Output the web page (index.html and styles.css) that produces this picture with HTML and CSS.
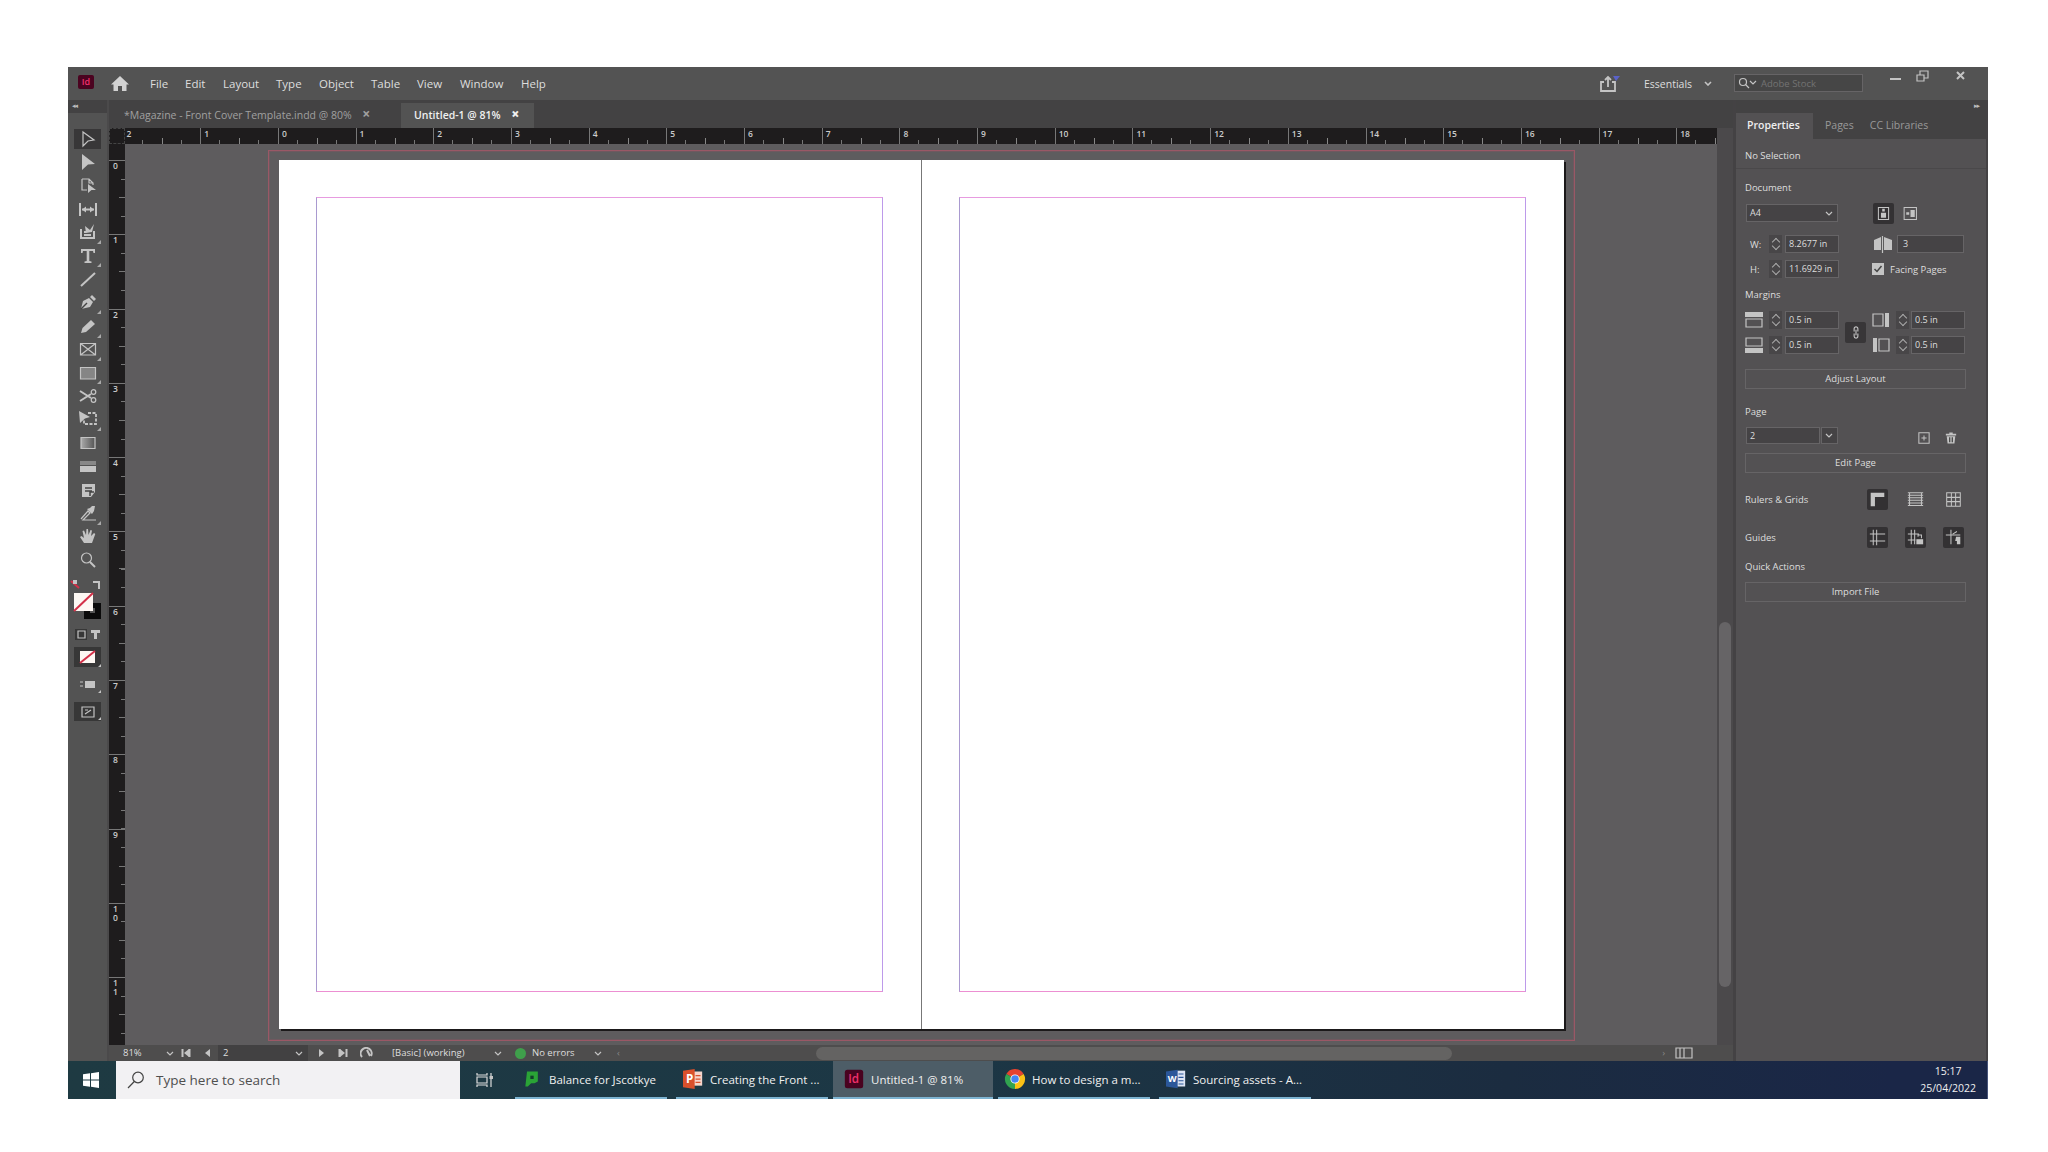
FILE: index.html
```
<!DOCTYPE html>
<html lang="en">
<head>
    <meta charset="UTF-8">
    <meta name="viewport" content="width=device-width, initial-scale=1.0">
    <title>Untitled-1 @ 81%</title>
    <link rel="stylesheet" href="styles.css">
</head>
<body>
    <div class="screen">
        <header class="menubar">
            <div class="app-logo">Id</div>
            <svg class="home" viewBox="0 0 18 16"><path d="M9 0L18 8.500H15.500V15H11V10H7V15H2.500V8.500H0Z"/></svg>
            <nav class="menu">
                <span>File</span><span>Edit</span><span>Layout</span><span>Type</span><span>Object</span><span>Table</span><span>View</span><span>Window</span><span>Help</span>
            </nav>
            <svg class="share" viewBox="0 0 22 18"><path class="line2" d="M5 7H2V16H16V7H13M9 12V3M6 5L9 2L12 5"/><path class="blue" d="M14 1h7l-4 5z"/></svg>
            <span class="workspace">Essentials</span>
            <svg class="chev big" viewBox="0 0 8 5"><path d="M1 1L4 4L7 1"/></svg>
            <div class="stock">
                <svg viewBox="0 0 20 12"><circle cx="5" cy="5" r="3.500"/><path d="M7.500 7.500L11 11M12 4L15 7L18 4"/></svg>
                <span>Adobe Stock</span>
            </div>
            <svg class="winbtns" viewBox="0 0 80 16"><path class="thick" d="M2 10H13"/><path d="M29 6H36V12H29ZM32 6V2H40V9H36"/><path class="thick" d="M69 3L76 10M76 3L69 10"/></svg>
        </header>

        <div class="workarea">
            <aside class="toolbar">
                <div class="strip">◂◂</div>
                <div class="tools">
                    <div class="tool on"><svg viewBox="0 0 20 20"><path d="M5 3L16 11L10 12L5 17Z"/></svg></div>
                    <div class="tool"><svg viewBox="0 0 20 20"><path class="fill" d="M4 2L17 12L10 12.500L4 18Z"/></svg></div>
                    <div class="tool"><svg viewBox="0 0 20 20"><path d="M4 4H11L15 8V10M4 4V15H9M11 4V8H15"/><path class="fill" d="M10 9L18 15L13.500 15L10 18Z"/></svg></div>
                    <div class="tool"><svg viewBox="0 0 20 20"><path class="thick" d="M2 4V17M18 4V17M4 10.500H16"/><path class="fill" d="M4 10.500L8 7.500V13.500ZM16 10.500L12 7.500V13.500Z"/></svg></div>
                    <div class="tool more"><svg viewBox="0 0 20 20"><path class="thick" d="M3 7V16H16V9M6 13H13M6 10H8"/><path class="fill" d="M7 4L12 8L16 2L14 10L8 11Z"/></svg></div>
                    <div class="tool more"><svg viewBox="0 0 20 20"><path class="fill" d="M3 3H17V7H15.500L15 5H11.300V15L13.500 15.500V17H6.500V15.500L8.700 15V5H5L4.500 7H3Z"/></svg></div>
                    <div class="tool"><svg viewBox="0 0 20 20"><path class="thick" d="M3 17L17 4"/></svg></div>
                    <div class="tool more"><svg viewBox="0 0 20 20"><path class="fill" d="M3 17L5 9L11 6L15 10L12 15ZM12 5L14 3L18 7L16 9Z"/><path class="dark" d="M3 17L9 11"/></svg></div>
                    <div class="tool more"><svg viewBox="0 0 20 20"><path class="fill" d="M3 17L4.500 12L13 4L17 8L8 16Z"/></svg></div>
                    <div class="tool more"><svg viewBox="0 0 20 20"><path d="M2.500 4.500H17.500V16H2.500ZM2.500 4.500L17.500 16M17.500 4.500L2.500 16"/></svg></div>
                    <div class="tool more"><svg viewBox="0 0 20 20"><path class="mid" d="M2.500 4.500H17.500V16H2.500Z"/></svg></div>
                    <div class="tool"><svg viewBox="0 0 20 20"><path class="thick" d="M2 5L13 12M2 15L13 8"/><circle cx="15.500" cy="6" r="2.300"/><circle cx="15.500" cy="14" r="2.300"/></svg></div>
                    <div class="tool more"><svg viewBox="0 0 20 20"><path class="fill" d="M1 2L12 8L7 9.500L2 14Z"/><path class="dash" d="M10 4H18V15H6V10"/></svg></div>
                    <div class="tool"><svg viewBox="0 0 20 20"><defs><linearGradient id="ga"><stop offset="0" stop-color="#aaa"/><stop offset="1" stop-color="#555"/></linearGradient></defs><path fill="url(#ga)" style="fill:url(#ga)" d="M3 4.500H17V15.500H3Z"/></svg></div>
                    <div class="tool"><svg viewBox="0 0 20 20"><path class="fill dim" d="M2 5H18V9H2Z"/><path class="fill" d="M2 10H18V16H2Z"/></svg></div>
                    <div class="tool"><svg viewBox="0 0 20 20"><path class="fill" d="M4 4H17V12L13 17H4Z"/><path class="dark" d="M7 8H14M7 11H14M12 16V12H16"/></svg></div>
                    <div class="tool more"><svg viewBox="0 0 20 20"><path d="M3 16L10 8L12 10L5 17H18"/><path class="fill" d="M9 6L14 11L16 8L17 3L14 3L12 5Z"/></svg></div>
                    <div class="tool"><svg viewBox="0 0 20 20"><path class="fill" d="M6 17L2 11L3.500 10L6 12L4.500 5L6 4.500L8 9L8.500 3H10L10.500 9L12.500 4L14 4.500L13 10L16 7L17.300 8L14 17Z"/></svg></div>
                    <div class="tool"><svg viewBox="0 0 20 20"><circle cx="8.500" cy="8" r="5"/><path class="thick" d="M12 12L17 17"/></svg></div>
                </div>
                <svg class="swatches" viewBox="0 0 38 148">
                    <path class="red" d="M3 5L11 12"/><path class="fill" d="M5 4H9V8H5Z"/><path class="thick" d="M25 6H31V13"/>
                    <path class="black" d="M16 27H33V43H16Z"/><path class="grey" d="M22 32H27V37H22Z"/>
                    <path class="white" d="M6 17H25V35H6Z"/><path class="red" d="M6 35L25 17"/>
                    <path class="well" d="M7 53H19V64H7Z"/><path d="M10 55H17V62H10Z"/><path class="fill" d="M23 54H32V57H29V63H26V57H23Z"/>
                    <path class="well" d="M6 71H33V91H6Z"/><path class="white" d="M12 75H27V87H12Z"/><path class="red" d="M12 87L27 75"/>
                    <path d="M12 106H15M12 110H15"/><path class="fill" d="M17 105H27V112H17Z"/>
                    <path class="well" d="M6 126H33V145H6Z"/><path d="M14 131H26V141H14ZM17 138L23 134M17 134H20"/>
                    <path class="fill" d="M33 91l-3 0l3-3zM33 117l-3 0l3-3zM33 144l-3 0l3-3z"/>
                </svg>
            </aside>

            <main class="document">
                <div class="doc-tabs">
                    <div class="doc-tab">*Magazine - Front Cover Template.indd @ 80% <b>×</b></div>
                    <div class="doc-tab current">Untitled-1 @ 81% <b>×</b></div>
                </div>
                <div class="doc-body">
                    <div class="corner"></div>
                    <div class="ruler-h" id="ruler-h"></div>
                    <div class="scroll-top"></div>
                    <div class="ruler-v" id="ruler-v"></div>
                    <div class="canvas">
                        <div class="bleed">
                            <div class="spread">
                                <div class="page"><div class="margin-box"></div></div>
                                <div class="page"><div class="margin-box"></div></div>
                            </div>
                        </div>
                    </div>
                    <div class="scroll-v"><div class="thumb"></div></div>
                </div>
                <div class="status">
                    <span>81%</span>
                    <svg class="chev" viewBox="0 0 8 5"><path d="M1 1L4 4L7 1"/></svg>
                    <svg class="nav" viewBox="0 0 10 10"><path class="thick" d="M1.500 1V9M8.500 1V9"/><path class="fill" d="M8 1V9L3 5Z"/></svg>
                    <svg class="nav" viewBox="0 0 10 10"><path class="fill" d="M7 1V9L2 5Z"/></svg>
                    <div class="page-field"><span>2</span><svg class="chev" viewBox="0 0 8 5"><path d="M1 1L4 4L7 1"/></svg></div>
                    <svg class="nav" viewBox="0 0 10 10"><path class="fill" d="M3 1V9L8 5Z"/></svg>
                    <svg class="nav" viewBox="0 0 10 10"><path class="thick" d="M8.500 1V9M1.500 1V9"/><path class="fill" d="M2 1V9L7 5Z"/></svg>
                    <svg class="preflight" viewBox="0 0 16 12"><path class="thick" d="M2 10A5.500 5.500 0 1 1 11 9M7 3L10 9"/></svg>
                    <span>[Basic] (working)</span>
                    <svg class="chev" viewBox="0 0 8 5"><path d="M1 1L4 4L7 1"/></svg>
                    <i class="ok"></i>
                    <span>No errors</span>
                    <svg class="chev" viewBox="0 0 8 5"><path d="M1 1L4 4L7 1"/></svg>
                    <span class="faint">‹</span>
                    <div class="scroll-h"></div>
                    <span class="faint">›</span>
                    <svg class="split" viewBox="0 0 18 12"><path d="M1 1H17V11H1ZM9 1V11M5 1V11"/></svg>
                </div>
            </main>

            <aside class="panel">
                <div class="strip right">▸▸</div>
                <div class="panel-tabs"><span class="current">Properties</span><span>Pages</span><span>CC Libraries</span></div>
                <div class="props">
                    <div class="row selection">No Selection</div>
                    <h2 class="doc-title">Document</h2>
                    <div class="row size-row">
                        <div class="field select">A4<svg class="chev" viewBox="0 0 8 5"><path d="M1 1L4 4L7 1"/></svg></div>
                        <div class="btn-icon on"><svg viewBox="0 0 20 20"><path d="M4 3H16V17H4Z"/><path class="fill" d="M7 9H13V15H7ZM8.500 4.500H11.500V7.500H8.500Z"/></svg></div>
                        <div class="btn-icon"><svg viewBox="0 0 20 20"><path d="M2.500 3H17V17H2.500Z"/><path class="fill" d="M10 6H15V14H10ZM5 8.500H8.500V11.500H5Z"/></svg></div>
                    </div>
                    <div class="row dims">
                        <label>W:</label><div class="stepper"></div><div class="field">8.2677 in</div>
                        <svg class="pages-icon" viewBox="0 0 20 18"><path class="fill" d="M1 5L8 2V15H1ZM11 2L19 5V15H11Z"/><path d="M9.500 1V18"/></svg><div class="field">3</div>
                    </div>
                    <div class="row dims second">
                        <label>H:</label><div class="stepper"></div><div class="field">11.6929 in</div>
                        <svg class="check" viewBox="0 0 12 12"><path class="fill" d="M0 0H12V12H0Z"/><path class="dark" d="M2.500 6L5 8.500L9.500 3"/></svg><span>Facing Pages</span>
                    </div>
                    <h2 class="margins-title">Margins</h2>
                    <div class="margins">
                        <div class="margin-col">
                            <div class="m-row"><svg viewBox="0 0 18 16"><path class="fill" d="M0 0H18V5H0Z"/><path d="M1 7H17V15H1Z"/></svg><div class="stepper"></div><div class="field">0.5 in</div></div>
                            <div class="m-row"><svg viewBox="0 0 18 16"><path d="M1 1H17V9H1Z"/><path class="fill" d="M0 11H18V16H0Z"/></svg><div class="stepper"></div><div class="field">0.5 in</div></div>
                        </div>
                        <div class="link"><svg viewBox="0 0 8 16"><path d="M2 7V4A2 2 0 0 1 6 4V7M2 9V12A2 2 0 0 0 6 12V9M4 5V11"/></svg></div>
                        <div class="margin-col">
                            <div class="m-row"><svg viewBox="0 0 18 16"><path d="M1 2H11V14H1Z"/><path class="fill" d="M13 1H17V15H13Z"/></svg><div class="stepper"></div><div class="field">0.5 in</div></div>
                            <div class="m-row"><svg viewBox="0 0 18 16"><path d="M7 2H17V14H7Z"/><path class="fill" d="M1 1H5V15H1Z"/></svg><div class="stepper"></div><div class="field">0.5 in</div></div>
                        </div>
                    </div>
                    <div class="button adjust">Adjust Layout</div>
                    <h2 class="page-title">Page</h2>
                    <div class="row page-row">
                        <div class="field">2</div>
                        <div class="field drop"><svg class="chev" viewBox="0 0 8 5"><path d="M1 1L4 4L7 1"/></svg></div>
                        <svg class="small" viewBox="0 0 14 14"><path d="M1 1H13V13H1ZM7 4V10M4 7H10"/></svg>
                        <svg class="small" viewBox="0 0 14 14"><path class="fill" d="M1 2H5V0.500H9V2H13V4H1ZM2 5H12L11 13.500H3Z"/><path class="dark" d="M5.500 6V12M8.500 6V12"/></svg>
                    </div>
                    <div class="button edit">Edit Page</div>
                    <div class="row toggles rulers">
                        <span>Rulers &amp; Grids</span>
                        <div class="btn-icon on"><svg viewBox="0 0 20 20"><path class="fill" d="M2 2H18V7H7V18H2Z"/></svg></div>
                        <div class="btn-icon"><svg viewBox="0 0 20 20"><path d="M1 2H19M1 5H19M1 8H19M1 11H19M1 14H19M1 17H19M3 2V17M17 2V17"/></svg></div>
                        <div class="btn-icon"><svg viewBox="0 0 20 20"><path d="M2 2H18V18H2ZM2 7.500H18M2 12.500H18M7.500 2V18M12.500 2V18"/></svg></div>
                    </div>
                    <div class="row toggles guides">
                        <span>Guides</span>
                        <div class="btn-icon on"><svg viewBox="0 0 20 20"><path d="M1 6H19M1 14H19M5 1V19M9 1V19"/></svg></div>
                        <div class="btn-icon on"><svg viewBox="0 0 20 20"><path d="M1 6H14M1 13H10M5 1V18M9 1V18M13 9V7H17V11"/><path class="fill" d="M11 12H19V18H11Z"/></svg></div>
                        <div class="btn-icon on"><svg viewBox="0 0 20 20"><path d="M1 7H18M7 1V18M9 6L14 3"/><path class="fill" d="M13 9H18V18H14V14H12Z"/></svg></div>
                    </div>
                    <h2 class="quick-title">Quick Actions</h2>
                    <div class="button import">Import File</div>
                </div>
            </aside>
        </div>

        <footer class="taskbar">
            <div class="start"><svg viewBox="0 0 16 16"><path d="M0 2.300L7 1.300V7.500H0ZM8 1.200L16 0V7.500H8ZM0 8.500H7V14.700L0 13.700ZM8 8.500H16V16L8 14.800Z"/></svg></div>
            <div class="search"><svg viewBox="0 0 18 18"><circle cx="11" cy="6.500" r="5.300"/><path d="M7.300 10.500L1 17"/></svg>Type here to search</div>
            <div class="taskview"><svg viewBox="0 0 18 16"><path d="M1 1V3H11V1M1 15V13H11V15M1 5H11V11H1ZM15 1V15"/><path class="fill" d="M13.500 4H17V7H13.500Z"/></svg></div>
            <div class="task">
                <svg viewBox="0 0 24 24"><path class="green" d="M6 3H19V15L15 17H11L7 21L4 21Z"/><path class="green-dark" d="M10 8H14V12H10Z"/></svg>Balance for Jscotkye
            </div>
            <div class="task">
                <svg viewBox="0 0 24 24"><path class="peach" d="M12 3H23V20H12Z"/><path class="orange-line" d="M15 8H21M15 12H21M15 16H21"/><path class="orange" d="M0 2L14 0V24L0 22Z"/><text x="3.500" y="17">P</text></svg>Creating the Front ...
            </div>
            <div class="task active">
                <svg viewBox="0 0 24 24"><rect class="id-bg" x="1" y="1" width="22" height="22" rx="3"/><text class="id-text" x="5" y="17">Id</text></svg>Untitled-1 @ 81%
            </div>
            <div class="task">
                <svg viewBox="0 0 24 24"><path fill="#e5432f" d="M12 12L1.600 6A12 12 0 0 1 22.400 6Z"/><path fill="#fbc116" d="M12 12L22.400 6A12 12 0 0 1 12 24Z"/><path fill="#31a350" d="M12 12L12 24A12 12 0 0 1 1.600 6Z"/><circle cx="12" cy="12" r="5.500" fill="#fff"/><circle cx="12" cy="12" r="4.500" fill="#4285f4"/></svg>How to design a m...
            </div>
            <div class="task">
                <svg viewBox="0 0 24 24"><path class="pale" d="M12 2H23V21H12Z"/><path class="word-line" d="M15 6H21M15 10H21M15 14H21M15 18H21"/><path class="word" d="M0 3L14 1V23L0 21Z"/><text class="w" x="2" y="16">W</text></svg>Sourcing assets - A...
            </div>
            <div class="clock"><span>15:17</span><span>25/04/2022</span></div>
        </footer>
    </div>

    <script>
        // Fill both rulers with one segment per inch
        function buildRuler(id, from, to) {
            const ruler = document.getElementById(id);
            for (let i = from; i <= to; i++) {
                const inch = document.createElement('div');
                inch.className = 'inch';
                inch.textContent = Math.abs(i);
                ruler.appendChild(inch);
            }
        }

        buildRuler('ruler-h', -2, 18);
        buildRuler('ruler-v', 0, 11);
    </script>
</body>
</html>
```
FILE: styles.css
```
:root {
    --bar: #535353;
    --dark: #434243;
    --panel: #535153;
    --field: #454345;
    --border: #666466;
    --icon: #c4c4c4;
    --text: #dedede;
}
* {
    box-sizing: border-box;
}
body {
    margin: 0;
    background: #fff;
    font-family: "Open Sans", "Noto Sans", sans-serif;
    overflow: hidden;
}
.screen {
    width: 1920px;
    height: 1032px;
    margin: 67px 0 0 68px;
    display: flex;
    flex-direction: column;
    color: var(--text);
    font-size: 10px;
    white-space: nowrap;
}
svg {
    display: block;
    flex: none;
    fill: none;
    stroke: var(--icon);
    stroke-width: 1.2;
}
.fill {
    fill: var(--icon);
    stroke: none;
}
.thick {
    stroke-width: 2;
}
.dark {
    stroke: #444;
    stroke-width: 1.5;
}
.mid {
    fill: #858585;
}
.dim {
    fill: #888;
}
.dash {
    stroke-dasharray: 3 1.5;
    stroke-width: 1.8;
}

/* menu bar */
.menubar {
    height: 33px;
    background: var(--bar);
    display: flex;
    align-items: center;
}
.app-logo {
    width: 16px;
    height: 14px;
    margin: 0 0 3px 10px;
    border-radius: 2px;
    background: #4b0320;
    color: #f0306c;
    font-size: 9px;
    font-weight: 600;
    line-height: 13px;
    text-align: center;
}
.home {
    width: 18px;
    height: 16px;
    margin-left: 17px;
}
.home path {
    fill: #d2d2d2;
    stroke: none;
}
.menu {
    width: 1399px;
    margin-left: 21px;
    display: grid;
    grid-template-columns: 35px 38px 53px 43px 52px 46px 43px 61px 40px;
    font-size: 11.5px;
}
.share {
    width: 22px;
    height: 18px;
    margin-left: 50px;
}
.line2 {
    stroke-width: 1.8;
}
.blue {
    fill: #5a62c8;
    stroke: none;
}
.workspace {
    width: 52px;
    margin-left: 23px;
    font-size: 10.5px;
}
.chev {
    width: 8px;
    height: 5px;
}
.chev.big {
    margin-left: 8px;
    stroke-width: 1.6;
}
.stock {
    width: 129px;
    height: 18px;
    margin: 0 25px 1px 22px;
    padding-left: 3px;
    border: 1px solid var(--border);
    background: #464646;
    display: flex;
    align-items: center;
    gap: 3px;
    color: #737373;
    font-size: 9.5px;
}
.stock svg {
    width: 20px;
    height: 12px;
}
.winbtns {
    width: 80px;
    height: 16px;
    margin-bottom: 13px;
}
.menubar .winbtns {
    margin-left: 0;
}

.workarea {
    height: 961px;
    display: flex;
    background: var(--dark);
}
.strip {
    height: 13px;
    padding-left: 4px;
    background: var(--dark);
    color: #bbb;
    font-family: "DejaVu Sans", sans-serif;
    font-size: 7px;
    line-height: 13px;
    letter-spacing: -1px;
}
.strip.right {
    padding: 0 7px 0 0;
    text-align: right;
}

/* tools */
.toolbar {
    width: 39px;
    background: var(--bar);
}
.tools {
    padding-top: 14px;
}
.tool {
    height: 23.4px;
    padding-left: 10px;
    display: flex;
    align-items: center;
    position: relative;
}
.tool svg {
    width: 20px;
    height: 20px;
}
.tool.on {
    width: 27px;
    height: 20px;
    margin: 1.7px 0 1.7px 6px;
    padding-left: 4px;
    background: #383738;
}
.tool.more::after {
    content: "";
    position: absolute;
    right: 6px;
    bottom: 0;
    border-left: 4px solid transparent;
    border-bottom: 4px solid #aaa;
}
.swatches {
    width: 38px;
    height: 148px;
    margin-top: 5px;
}
.red {
    stroke: #d33048;
    stroke-width: 2;
}
.black {
    fill: #0b0b0b;
    stroke: none;
}
.grey {
    fill: #555;
    stroke: none;
}
.white {
    fill: #fdf8f3;
    stroke: none;
}
.well {
    fill: #373737;
    stroke: none;
}

/* document window */
.document {
    width: 1626px;
    display: flex;
    flex-direction: column;
    border-left: 2px solid #4b4a4b;
}
.doc-tabs {
    height: 28px;
    padding: 3px 0 0 0;
    display: flex;
    font-size: 10.5px;
}
.doc-tab {
    width: 292px;
    padding-left: 15px;
    line-height: 24px;
    color: #a0a0a0;
}
.doc-tab b {
    margin-left: 8px;
    font-size: 14px;
    line-height: 10px;
}
.doc-tab.current {
    width: 133px;
    padding-left: 13px;
    background: var(--bar);
    color: #f0f0f0;
    font-weight: 600;
}
.doc-body {
    height: 917px;
    display: grid;
    grid-template-columns: 16px 1592px 16px;
    grid-template-rows: 16px 901px;
}
.corner {
    background: #1e1c1d;
    border: 1px dashed #444;
}
.ruler-h {
    display: flex;
    overflow: hidden;
    background: #1e1c1d;
}
.inch {
    flex: none;
    color: #ccc;
    font-size: 8.5px;
    font-weight: 600;
}
.ruler-h .inch {
    width: 77.7px;
    padding-left: 4px;
    line-height: 11px;
    background:
        linear-gradient(#777, #777) 0 0 / 1px 16px no-repeat,
        linear-gradient(#888, #888) 39px 100% / 1px 6px no-repeat,
        repeating-linear-gradient(90deg, #777 0 1px, transparent 1px 19.42px) 0 100% / 100% 4px no-repeat;
}
.ruler-h .inch:first-child {
    margin-left: -2.5px;
}
.scroll-top {
    background: #4b494b;
}
.ruler-v {
    padding-top: 16px;
    overflow: hidden;
    background: repeating-linear-gradient(#777 0 1px, transparent 1px 18.57px) 100% -2.6px / 4px 100% no-repeat #1e1c1d;
}
.ruler-v .inch {
    height: 74.3px;
    padding: 1px 7px 0 4px;
    line-height: 9px;
    word-break: break-all;
    white-space: normal;
    background:
        linear-gradient(#777, #777) 0 0 / 16px 1px no-repeat,
        linear-gradient(#777, #777) 100% 37px / 6px 1px no-repeat;
}
.canvas {
    padding: 6px 0 0 143px;
    background: #5e5c5e;
}
.bleed {
    width: 1307px;
    height: 891px;
    padding: 9px;
    border: 1px solid #9a5866;
    box-shadow: inset 0 0 0 1px #70585f;
}
.spread {
    width: 1285px;
    height: 869px;
    margin-left: 1px;
    display: grid;
    grid-template-columns: 643px 642px;
    background: #fff;
    box-shadow: 2px 2px 0 #1b191a;
}
.page {
    padding: 37px 38px 37px 37px;
}
.page:first-child {
    border-right: 1px solid #777;
}
.page + .page {
    padding-left: 37px;
}
.margin-box {
    width: 567px;
    height: 795px;
    border: 1px solid;
    border-color: #e79be0 #bd9aea #ec8fd2 #a99ad0;
}
.scroll-v {
    padding: 478px 2px 0 2px;
    background: #4b494b;
}
.scroll-v .thumb {
    height: 365px;
    border-radius: 6px;
    background: #666466;
}

/* status bar under the canvas */
.status {
    height: 16px;
    padding-left: 14px;
    background: #4e4d4d;
    display: grid;
    grid-template-columns: 43px 15px 22px 15px 98px 22px 22px 32px 102px 21px 17px 62px 15px 207px 636px 223px 18px;
    align-items: center;
    justify-content: start;
    font-size: 9.5px;
    line-height: 16px;
}
.status > * {
    justify-self: start;
}
.nav {
    width: 10px;
    height: 10px;
}
.page-field {
    width: 90px;
    height: 16px;
    padding: 0 5px;
    background: #424142;
    display: flex;
    align-items: center;
    justify-content: space-between;
}
.preflight {
    width: 16px;
    height: 12px;
}
.ok {
    width: 11px;
    height: 11px;
    border-radius: 50%;
    background: #3f9f4b;
}
.faint {
    color: #888;
}
.status > .faint {
    padding-left: 8px;
}
.status > .scroll-h + .faint {
    justify-self: end;
    padding-right: 10px;
}
.scroll-h {
    width: 636px;
    height: 13px;
    border-radius: 7px;
    background: #646362;
}
.split {
    width: 18px;
    height: 12px;
}

/* properties panel */
.panel {
    width: 255px;
    background: var(--panel);
    border-left: 3px solid #444244;
    border-right: 2px solid #444244;
}
.panel-tabs {
    height: 26px;
    display: flex;
    background: var(--dark);
    color: #999;
    font-size: 10.5px;
    line-height: 25px;
}
.panel-tabs span {
    margin-right: 16px;
}
.panel-tabs .current {
    width: 77px;
    margin-right: 12px;
    padding-left: 11px;
    background: var(--panel);
    color: #eee;
    font-weight: 600;
}
.props {
    padding-left: 9px;
    font-size: 9.5px;
}
.props h2 {
    height: 14px;
    margin: 0;
    font-size: 9.5px;
    font-weight: 400;
    line-height: 14px;
}
.row {
    display: flex;
    align-items: center;
}
.selection {
    height: 30px;
    margin-left: -9px;
    padding: 3px 0 0 9px;
    border-bottom: 1px solid #4a484a;
}
.props .doc-title {
    margin-top: 12px;
}
.field {
    width: 54px;
    height: 18px;
    padding-left: 3px;
    border: 1px solid var(--border);
    background: var(--field);
    font-size: 9px;
    line-height: 16px;
}
.size-row {
    height: 20px;
    margin-top: 8px;
}
.select {
    width: 92px;
    margin: 0 35px 0 1px;
    padding-right: 4px;
    display: flex;
    align-items: center;
    justify-content: space-between;
}
.btn-icon {
    width: 21px;
    height: 21px;
    padding: 2px;
    border-radius: 2px;
}
.btn-icon svg {
    width: 17px;
    height: 17px;
}
.btn-icon.on {
    background: #333133;
}
.size-row .btn-icon + .btn-icon {
    margin-left: 6px;
}
.dims {
    height: 18px;
    margin-top: 12px;
}
.dims.second {
    margin-top: 7px;
}
.dims label {
    width: 24px;
    padding-left: 5px;
}
.stepper {
    flex: none;
    width: 13px;
    height: 18px;
    margin-right: 3px;
    background: #484648;
    display: flex;
    flex-direction: column;
    align-items: center;
    justify-content: space-evenly;
}
.stepper::before,
.stepper::after {
    content: "";
    width: 5px;
    height: 5px;
    border: solid #aaa;
    border-width: 1px 0 0 1px;
    transform: translateY(2px) rotate(45deg);
}
.stepper::after {
    transform: translateY(-2px) rotate(225deg);
}
.pages-icon {
    width: 20px;
    height: 18px;
    margin: 0 4px 0 34px;
}
.pages-icon + .field {
    width: 67px;
    padding-left: 5px;
}
.check {
    width: 12px;
    height: 12px;
    margin: 0 6px 0 33px;
}
.props .margins-title {
    margin-top: 10px;
}
.margins {
    margin-top: 9px;
    display: flex;
    align-items: center;
}
.margin-col {
    display: grid;
    gap: 7px;
}
.m-row {
    display: flex;
    align-items: center;
}
.m-row svg {
    width: 18px;
    height: 16px;
    margin-right: 6px;
}
.link {
    width: 21px;
    height: 21px;
    margin: 0 6px;
    padding: 3px 7px;
    border-radius: 2px;
    background: #383638;
}
.link svg {
    width: 8px;
    height: 15px;
}
.link + .margin-col .stepper {
    margin-right: 2px;
}
.button {
    width: 221px;
    height: 20px;
    border: 1px solid var(--border);
    line-height: 18px;
    text-align: center;
}
.adjust {
    margin-top: 15px;
}
.props .page-title {
    margin-top: 16px;
}
.page-row {
    height: 17px;
    margin: 8px 0 9px 1px;
}
.page-row .field {
    width: 74px;
    height: 17px;
}
.page-row .drop {
    width: 17px;
    margin: 0 80px 0 1px;
    padding: 5px 3px;
}
.small {
    width: 12px;
    height: 12px;
    margin: 4px 15px 0 0;
}
.toggles {
    height: 21px;
    display: grid;
    grid-template-columns: 122px 38px 38px 22px;
}
.rulers {
    margin-top: 16px;
}
.guides {
    margin-top: 17px;
}
.props .quick-title {
    margin-top: 12px;
}
.import {
    margin-top: 8px;
}

/* windows taskbar */
.taskbar {
    height: 38px;
    display: flex;
    background: linear-gradient(90deg, #1e3a42 0%, #1c3745 45%, #1b2c40 75%, #1a2647 95%);
    color: #f0f0f0;
    font-size: 11.5px;
}
.start {
    width: 48px;
    padding: 11px 0 0 15px;
}
.start svg {
    width: 16px;
    height: 16px;
    fill: #fff;
    stroke: none;
}
.search {
    width: 344px;
    padding-left: 11px;
    background: #f2f1f3;
    display: flex;
    align-items: center;
    gap: 11px;
    color: #4f4f4f;
    font-size: 13.5px;
}
.search svg {
    width: 18px;
    height: 18px;
    stroke: #444;
}
.taskview {
    width: 55px;
    padding: 11px 0 0 16px;
}
.taskview svg {
    width: 18px;
    height: 16px;
    stroke: #ddd;
}
.task {
    width: 152px;
    margin-right: 9px;
    padding-left: 5px;
    border-bottom: 2px solid #7db4d2;
    display: flex;
    align-items: center;
    gap: 5px;
}
.task svg {
    width: 24px;
    height: 20px;
    stroke: none;
}
.task.active {
    width: 160px;
    margin: 0 5px 0 -4px;
    padding-left: 9px;
    background: #4d5d67;
}
.task text {
    fill: #fff;
    font-size: 14px;
    font-weight: 700;
}
.green {
    fill: #2aa336;
}
.green-dark {
    fill: #123f2b;
}
.peach {
    fill: #f5d5cc;
}
.orange {
    fill: #d9502b;
}
.orange-line {
    stroke: #d9502b;
    stroke-width: 1.5;
}
.id-bg {
    fill: #49021f;
}
.task .id-text {
    fill: #f0306c;
    font-weight: 600;
}
.pale {
    fill: #dde5f5;
}
.word {
    fill: #2b579a;
}
.word-line {
    stroke: #2b579a;
    stroke-width: 1.3;
}
.task text.w {
    font-size: 11px;
}
.clock {
    margin-left: auto;
    padding: 0 11px 0 0;
    display: flex;
    flex-direction: column;
    align-items: center;
    font-size: 10.5px;
    line-height: 17px;
    padding-top: 2px;
    border-right: 1px solid #48557a;
}
```
